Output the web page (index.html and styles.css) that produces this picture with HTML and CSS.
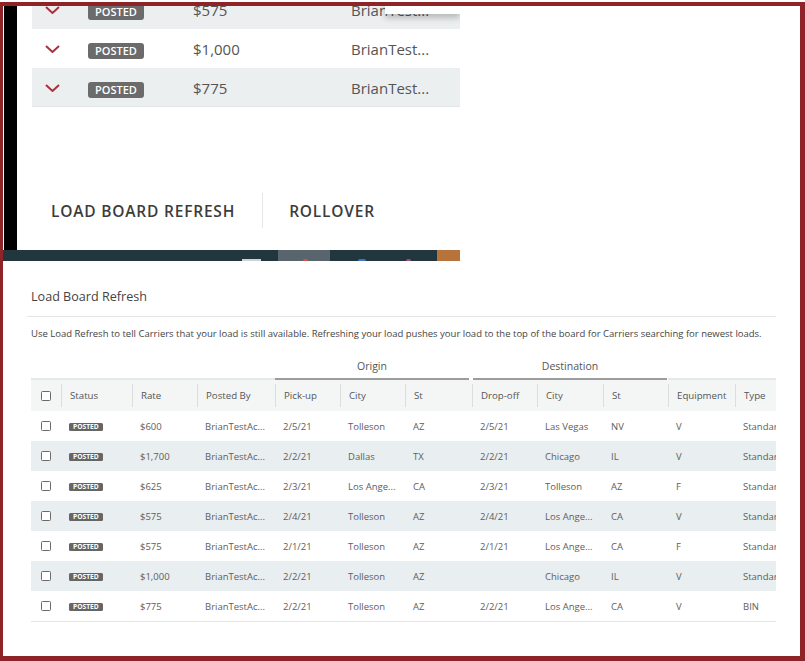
FILE: index.html
```html
<!DOCTYPE html>
<html lang="en">
<head>
<meta charset="UTF-8" />
<title>Load Board Refresh</title>
<link rel="stylesheet" href="styles.css">
</head>
<body>

<div class="frame">

  <!-- cropped capture of the load list -->
  <div class="shot">
    <div class="shot-main">
      <div class="bezel"></div>
      <div class="shot-body">
        <div class="loads">
          <div class="load-row shade cut">
            <span class="chev"><svg width="15" height="8" viewBox="0 0 15 8"><polyline points="1,1 7.5,7 14,1" /></svg></span>
            <span><span class="badge">POSTED</span></span>
            <span class="rate">$575</span>
            <span class="owner">BrianTest...</span>
            <div class="popover"></div>
          </div>
          <div class="load-row">
            <span class="chev"><svg width="15" height="8" viewBox="0 0 15 8"><polyline points="1,1 7.5,7 14,1" /></svg></span>
            <span><span class="badge">POSTED</span></span>
            <span class="rate">$1,000</span>
            <span class="owner">BrianTest...</span>
          </div>
          <div class="load-row shade">
            <span class="chev"><svg width="15" height="8" viewBox="0 0 15 8"><polyline points="1,1 7.5,7 14,1" /></svg></span>
            <span><span class="badge">POSTED</span></span>
            <span class="rate">$775</span>
            <span class="owner">BrianTest...</span>
          </div>
        </div>

        <div class="actions">
          <button class="action">LOAD BOARD REFRESH</button>
          <span class="action-sep"></span>
          <button class="action">ROLLOVER</button>
        </div>
      </div>
    </div>

    <div class="taskbar">
      <span class="tb-gap" style="width:239px"></span>
      <span class="tb-app"></span>
      <span class="tb-gap" style="width:17px"></span>
      <span class="tb-active"><i class="dot red"></i></span>
      <span class="tb-gap tb-icons" style="width:107px"><i class="dot blue"></i><i class="dot purple"></i></span>
      <span class="tb-end"></span>
    </div>
  </div>

  <!-- modal content -->
  <section class="refresh">
    <h2 class="refresh-title">Load Board Refresh</h2>
    <div class="rule"></div>
    <p class="refresh-desc">Use Load Refresh to tell Carriers that your load is still available. Refreshing your load pushes your load to the top of the board for Carriers searching for newest loads.</p>

    <div class="grid">
      <div class="group-row">
        <span class="group-blank lead"></span>
        <span class="group origin">Origin</span>
        <span class="group dest">Destination</span>
        <span class="group-blank tail"></span>
      </div>

      <div class="trow thead">
        <span class="cb-cell"><i class="cb"></i></span>
        <span>Status</span>
        <span>Rate</span>
        <span>Posted By</span>
        <span>Pick-up</span>
        <span>City</span>
        <span>St</span>
        <span>Drop-off</span>
        <span>City</span>
        <span>St</span>
        <span>Equipment</span>
        <span>Type</span>
      </div>

      <div class="trow">
        <span class="cb-cell"><i class="cb"></i></span>
        <span><b class="tag">POSTED</b></span>
        <span>$600</span>
        <span>BrianTestAc...</span>
        <span>2/5/21</span>
        <span>Tolleson</span>
        <span>AZ</span>
        <span>2/5/21</span>
        <span>Las Vegas</span>
        <span>NV</span>
        <span>V</span>
        <span>Standard</span>
      </div>
      <div class="trow shade">
        <span class="cb-cell"><i class="cb"></i></span>
        <span><b class="tag">POSTED</b></span>
        <span>$1,700</span>
        <span>BrianTestAc...</span>
        <span>2/2/21</span>
        <span>Dallas</span>
        <span>TX</span>
        <span>2/2/21</span>
        <span>Chicago</span>
        <span>IL</span>
        <span>V</span>
        <span>Standard</span>
      </div>
      <div class="trow">
        <span class="cb-cell"><i class="cb"></i></span>
        <span><b class="tag">POSTED</b></span>
        <span>$625</span>
        <span>BrianTestAc...</span>
        <span>2/3/21</span>
        <span>Los Ange...</span>
        <span>CA</span>
        <span>2/3/21</span>
        <span>Tolleson</span>
        <span>AZ</span>
        <span>F</span>
        <span>Standard</span>
      </div>
      <div class="trow shade">
        <span class="cb-cell"><i class="cb"></i></span>
        <span><b class="tag">POSTED</b></span>
        <span>$575</span>
        <span>BrianTestAc...</span>
        <span>2/4/21</span>
        <span>Tolleson</span>
        <span>AZ</span>
        <span>2/4/21</span>
        <span>Los Ange...</span>
        <span>CA</span>
        <span>V</span>
        <span>Standard</span>
      </div>
      <div class="trow">
        <span class="cb-cell"><i class="cb"></i></span>
        <span><b class="tag">POSTED</b></span>
        <span>$575</span>
        <span>BrianTestAc...</span>
        <span>2/1/21</span>
        <span>Tolleson</span>
        <span>AZ</span>
        <span>2/1/21</span>
        <span>Los Ange...</span>
        <span>CA</span>
        <span>F</span>
        <span>Standard</span>
      </div>
      <div class="trow shade">
        <span class="cb-cell"><i class="cb"></i></span>
        <span><b class="tag">POSTED</b></span>
        <span>$1,000</span>
        <span>BrianTestAc...</span>
        <span>2/2/21</span>
        <span>Tolleson</span>
        <span>AZ</span>
        <span></span>
        <span>Chicago</span>
        <span>IL</span>
        <span>V</span>
        <span>Standard</span>
      </div>
      <div class="trow last">
        <span class="cb-cell"><i class="cb"></i></span>
        <span><b class="tag">POSTED</b></span>
        <span>$775</span>
        <span>BrianTestAc...</span>
        <span>2/2/21</span>
        <span>Tolleson</span>
        <span>AZ</span>
        <span>2/2/21</span>
        <span>Los Ange...</span>
        <span>CA</span>
        <span>V</span>
        <span>BIN</span>
      </div>
    </div>
  </section>

</div>

</body>
</html>
```

FILE: styles.css
```css
body {
  margin: 0;
  background: #fff;
  font-family: "Open Sans", "DejaVu Sans", sans-serif;
  color: #555;
}
.frame {
  margin-top: 2px;
  width: 805px;
  height: 659px;
  box-sizing: border-box;
  border: 4px solid #8e2328;
  border-left-width: 3px;
  border-right-width: 5px;
  border-bottom-width: 5px;
  overflow: hidden;
}

/* top capture */
.shot {
  width: 457px;
}
.shot-main {
  display: flex;
  height: 244px;
  overflow: hidden;
}
.bezel {
  width: 13px;
  margin-left: 1px;
  background: #000;
  flex-shrink: 0;
}
.shot-body {
  flex: 1;
  background: #fff;
}
.loads {
  margin-left: 15px;
}
.load-row {
  position: relative;
  display: grid;
  grid-template-columns: 43px 105px 158px 1fr;
  align-items: center;
  height: 39px;
  padding-left: 13px;
  font-size: 15px;
  color: #555;
}
.load-row.cut {
  margin-top: -16px;
}
.load-row.shade {
  background: #ebeff0;
}
.loads .load-row:last-child {
  border-bottom: 1px solid #e2e6e7;
  height: 39px;
  padding-top: 1px;
  box-sizing: border-box;
}
.chev svg {
  display: block;
}
.chev polyline {
  fill: none;
  stroke: #a8323a;
  stroke-width: 2;
}
.badge {
  display: inline-block;
  height: 16px;
  line-height: 16px;
  padding: 0 7px;
  border-radius: 3px;
  background: #6b6b6b;
  color: #fff;
  font-size: 11px;
  font-weight: 600;
}
.owner {
  white-space: nowrap;
}
.popover {
  position: absolute;
  left: 353px;
  right: 0;
  top: 0;
  height: 24px;
  background: #fff;
  box-shadow: 0 4px 6px rgba(0,0,0,0.22);
}
.actions {
  display: flex;
  align-items: center;
  height: 35px;
  margin-top: 86px;
  padding-left: 34px;
}
.action {
  background: none;
  border: none;
  padding: 0;
  font-family: inherit;
  font-size: 15.5px;
  font-weight: 600;
  letter-spacing: 0.8px;
  color: #3c3c3c;
}
.action-sep {
  width: 1px;
  height: 35px;
  background: #e6e6e6;
  margin: 0 26px 0 27px;
}
.taskbar {
  display: flex;
  height: 11px;
  background: #22363e;
}
.tb-gap {
  position: relative;
  display: block;
}
.tb-app {
  width: 19px;
  height: 2px;
  margin-top: 9px;
  background: #cfd3d5;
}
.tb-active {
  position: relative;
  width: 52px;
  background: #59656d;
}
.tb-end {
  width: 23px;
  background: #b8733a;
}
.dot {
  position: absolute;
  bottom: 0;
  width: 5px;
  height: 2px;
  border-radius: 2px 2px 0 0;
}
.dot.red { left: 25px; background: #d9504a; }
.dot.blue { left: 28px; width: 8px; background: #3a78c9; }
.dot.purple { left: 76px; background: #a04f8e; }

/* modal */
.refresh {
  padding: 27px 24px 0 28px;
}
.refresh-title {
  margin: 0;
  font-size: 12.6px;
  line-height: 18px;
  font-weight: 400;
  color: #444;
}
.rule {
  margin: 10px 0 0 -4px;
  height: 1px;
  background: #e4e6e6;
}
.refresh-desc {
  margin: 11px 0 0;
  font-size: 9.5px;
  line-height: 12px;
  color: #444;
  white-space: nowrap;
}
.grid {
  width: 745px;
  overflow: hidden;
  margin-top: 19px;
}
.group-row,
.trow {
  display: grid;
  grid-template-columns: 30px 71px 65px 78px 65px 65px 67px 65px 66px 65px 67px 80px;
}
.group-row {
  font-size: 10.5px;
  line-height: 14px;
  color: #555;
}
.group-blank {
  border-bottom: 2px solid #e6e8e8;
}
.group-blank.lead {
  grid-column: span 4;
}
.group-blank.tail {
  grid-column: span 2;
}
.group {
  grid-column: span 3;
  text-align: center;
  padding-bottom: 5px;
  border-bottom: 2px solid #9c9c9c;
}
.group.origin {
  margin-right: 3px;
  box-shadow: 3px 0 0 #fff;
}
.group.dest {
  margin-left: 1px;
  margin-right: 1px;
}
.trow {
  height: 30px;
  align-items: center;
  font-size: 9.5px;
  color: #5e5e5e;
}
.trow > span {
  padding-left: 8px;
  white-space: nowrap;
  overflow: hidden;
}
.trow.shade {
  background: #e9eef0;
}
.trow.last {
  border-bottom: 1px solid #e4e6e6;
}
.thead {
  height: 31px;
  box-sizing: border-box;
  background: #f4f5f5;
  padding: 4px 0 4px;
  align-items: stretch;
  font-size: 9.7px;
  color: #555;
}
.thead > span {
  display: flex;
  align-items: center;
  border-left: 1px solid #dcdede;
}
.trow > .cb-cell,
.thead > .cb-cell {
  display: flex;
  align-items: center;
  justify-content: center;
  padding-left: 0;
  border-left: none;
}
.cb {
  display: block;
  width: 10px;
  height: 10px;
  box-sizing: border-box;
  border: 1.5px solid #6a6a6a;
  border-radius: 1.5px;
  background: #fff;
}
.tag {
  display: inline-block;
  vertical-align: middle;
  height: 8px;
  line-height: 8px;
  padding: 0 4px;
  border-radius: 1.5px;
  background: #666;
  color: #fff;
  font-size: 6.7px;
  font-weight: 700;
}
```
